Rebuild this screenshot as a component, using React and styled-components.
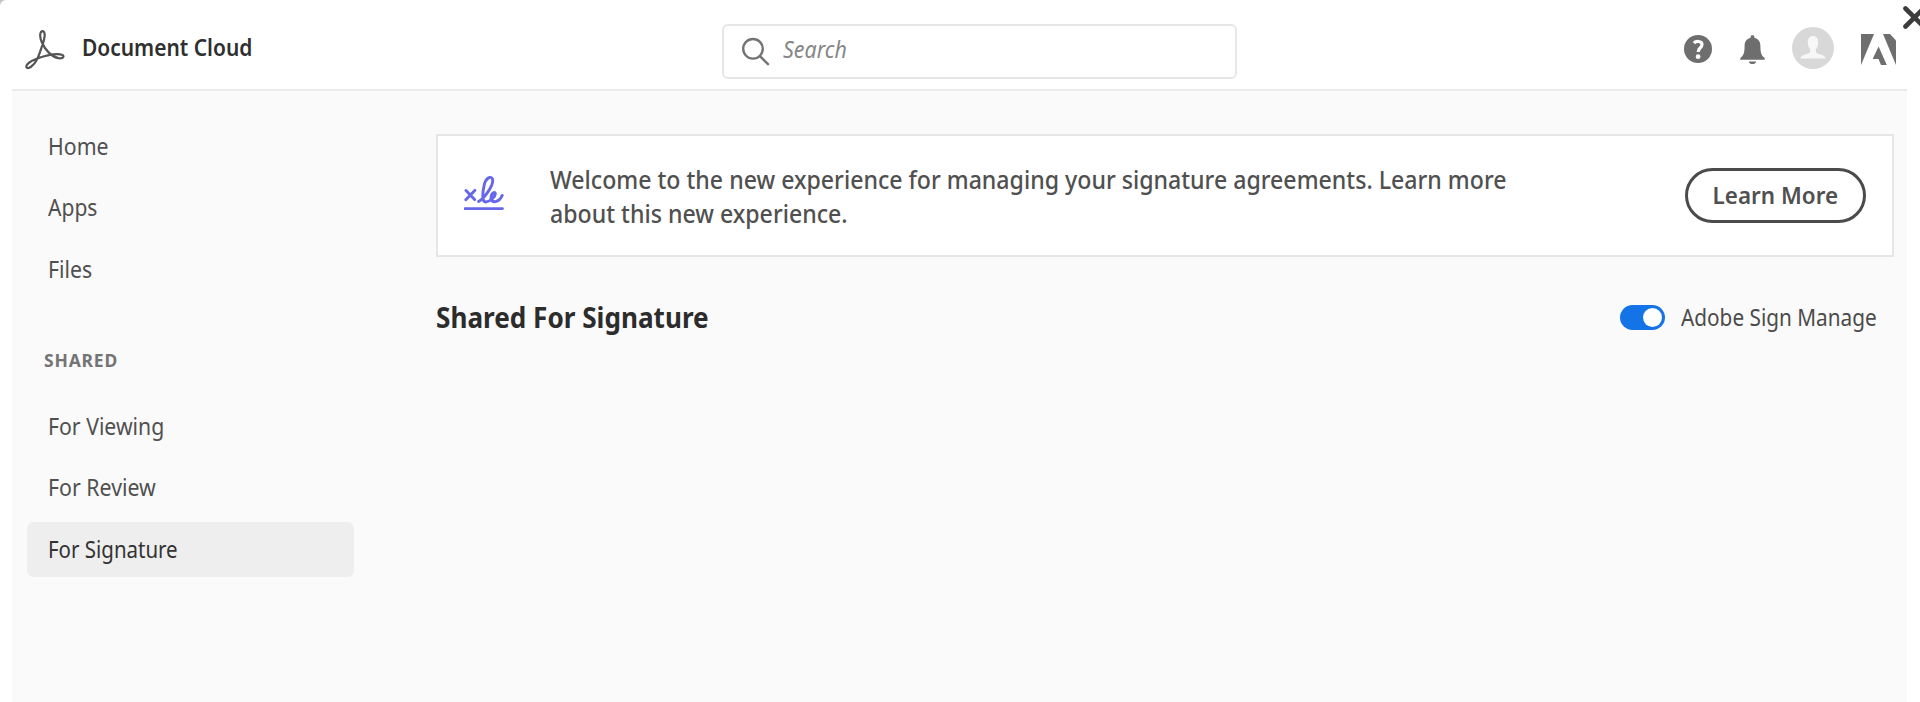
import React, { useState } from 'react';
import styled, { createGlobalStyle } from 'styled-components';

const mainLinks = [
    { label: 'Home', fit: 0.925 },
    { label: 'Apps', fit: 0.915 },
    { label: 'Files', fit: 0.925 },
];

const sharedLinks = [
    { label: 'For Viewing', fit: 0.923 },
    { label: 'For Review', fit: 0.927 },
    { label: 'For Signature', fit: 0.89 },
];

function Header() {
    return (
        <TopBar>
            <Brand>
                <AcrobatLogo viewBox='0 0 42 42'>
                    <path d='M18.2 16.5C20.8 9.5 21.8 3.2 19 2.2C15.6 1.8 15.3 7.8 18 13.8C21 20.6 27.6 28 34.5 29.2C40.6 29.8 41 25.8 36 25.3C30.4 24.8 20.4 26.8 12.6 29.8C5.5 32.6 1.6 36 2.4 38.2C4 40.8 9.6 37 13 30.4C15.2 26 16.8 20.6 18.2 16.5Z' />
                </AcrobatLogo>
                <BrandName>Document Cloud</BrandName>
            </Brand>

            <SearchBox>
                <SearchIcon viewBox='0 0 28 29'>
                    <circle cx='11' cy='11.8' r='9.8' />
                    <path d='M18 19.2L26 27.2' />
                </SearchIcon>
                <SearchText>Search</SearchText>
            </SearchBox>

            <Actions>
                <HelpIcon viewBox='0 0 28 28'>
                    <circle cx='14' cy='14' r='14' fill='#6e6e6e' />
                    <path d='M9.9 8.1C11.6 6.1 18 5.3 18 9.6C18 12.7 14.2 12.9 14.2 16.9' fill='none' stroke='#fff' strokeWidth='3.2' />
                    <circle cx='14.1' cy='21.7' r='2.4' fill='#fff' />
                </HelpIcon>
                <BellIcon viewBox='0 0 25 30'>
                    <path d='M10.7 1.6C10.7 -0.2 14.3 -0.2 14.3 1.6V2.8C18.6 3.8 20.4 7 20.4 11C20.4 18 21.6 20.5 24.2 22.6C25 23.4 24.8 24.8 24.8 24.8H0.2C0.2 24.8 0 23.4 0.8 22.6C3.4 20.5 4.6 18 4.6 11C4.6 7 6.4 3.8 10.7 2.8Z' />
                    <path d='M8.8 26.4H16.2C15.6 30 9.4 30 8.8 26.4Z' />
                </BellIcon>
                <Avatar viewBox='0 0 42 42'>
                    <circle cx='21' cy='21' r='21' fill='#d8d8d8' />
                    <path d='M21 9C24.4 9 26.2 11.5 26.2 15.2C26.2 18.6 25.2 20.4 24 22V25C24 27.4 33.2 27 33.6 31.4H8.4C8.8 27 18 27.4 18 25V22C16.8 20.4 15.8 18.6 15.8 15.2C15.8 11.5 17.6 9 21 9Z' fill='#f7f7f7' />
                </Avatar>
                <AdobeLogo viewBox='0 0 35 31'>
                    <path d='M0 0H13L0 31Z' />
                    <path d='M22 0H29L35 6.5V31Z' />
                    <path d='M17.6 12.4L25.8 31H20L17.5 25H11.6Z' />
                </AdobeLogo>
            </Actions>
        </TopBar>
    );
}

function Sidebar() {
    const [active, setActive] = useState('For Signature');

    const renderLink = ({ label, fit }) => (
        <NavItem key={label} $active={active === label} onClick={() => setActive(label)}>
            <Condensed $fit={fit}>{label}</Condensed>
        </NavItem>
    );

    return (
        <Side>
            <NavGroup>{mainLinks.map(renderLink)}</NavGroup>
            <NavTitle>SHARED</NavTitle>
            <NavGroup>{sharedLinks.map(renderLink)}</NavGroup>
        </Side>
    );
}

function Banner() {
    return (
        <Card>
            <SignIcon viewBox='0 0 40 36'>
                <path d='M2 14.6L10.6 23.6M10.8 14.4L1.8 23.8' />
                <path d='M14.6 25.6C20 22.6 30.4 9 28.4 2.8C26.8 -0.4 21.8 2 20.2 9C18.6 16 17.6 26 21.8 26C25.6 25.8 32.2 20.6 31.2 17C29.6 14.8 26.2 19.6 27.2 23C28.6 27.6 35.4 26 38.2 19.4' />
                <path d='M1 32.6H38.4' />
            </SignIcon>
            <BannerText>
                Welcome to the new experience for managing your signature agreements. Learn more
                <br />
                about this new experience.
            </BannerText>
            <LearnMore>
                <Condensed $fit={0.975} $origin='center'>Learn More</Condensed>
            </LearnMore>
        </Card>
    );
}

function App() {
    const [manage, setManage] = useState(true);

    return (
        <Page>
            <GlobalStyle />
            <Window>
                <Header />
                <Body>
                    <Sidebar />
                    <Content>
                        <Banner />
                        <TitleRow>
                            <Title>Shared For Signature</Title>
                            <SwitchLabel onClick={() => setManage(!manage)}>
                                <Switch $on={manage} />
                                <SwitchText>Adobe Sign Manage</SwitchText>
                            </SwitchLabel>
                        </TitleRow>
                    </Content>
                </Body>
                <CloseIcon viewBox='0 0 23 23'>
                    <path d='M2.5 2.5L20.5 20.5M20.5 2.5L2.5 20.5' />
                </CloseIcon>
            </Window>
        </Page>
    );
}

export default App;

const GlobalStyle = createGlobalStyle`
    * {
        box-sizing: border-box;
    }

    body {
        margin: 0;
        overflow: hidden;
        font-family: 'Noto Sans', 'Open Sans', sans-serif;
        font-size: 23px;
        color: #4b4b4b;
    }
`;

const Page = styled.div`
    height: 702px;
    background-color: #c4c4c4;
`;

const Window = styled.div`
    position: relative;
    height: 100%;
    padding: 0 13px 0 12px;
    overflow: hidden;
    background-color: #fff;
    border-top-left-radius: 6px;
`;

/* Squeezes the text horizontally to get a narrower face */
const Condensed = styled.span`
    display: inline-block;
    white-space: nowrap;
    transform: scaleX(${(props) => props.$fit});
    transform-origin: ${(props) => props.$origin || 'left'};
`;

const TopBar = styled.header`
    display: grid;
    grid-template-columns: 709.5px 515px 1fr;
    height: 91px;
    border-bottom: 2px solid #ebebeb;
`;

const Brand = styled.div`
    display: flex;
    align-items: flex-start;
    padding: 29px 0 0 12px;
`;

const AcrobatLogo = styled.svg`
    width: 42px;
    height: 42px;
    fill: none;
    stroke: #555;
    stroke-width: 2.2;
`;

const BrandName = styled.div`
    margin: 0 0 0 16px;
    line-height: 37px;
    font-weight: 600;
    color: #2f2f2f;
    white-space: nowrap;
    transform: scaleX(0.91);
    transform-origin: left;
`;

const SearchBox = styled.div`
    display: flex;
    align-items: flex-start;
    height: 55px;
    margin-top: 23.5px;
    padding: 12px 0 0 18.5px;
    background-color: #fff;
    border: 2px solid #e6e6e6;
    border-radius: 6px;
`;

const SearchIcon = styled.svg`
    width: 28px;
    height: 29px;
    margin-top: -1px;
    fill: none;
    stroke: #747474;
    stroke-width: 2.4;
    stroke-linecap: round;
`;

const SearchText = styled.div`
    margin: -1px 0 0 13px;
    line-height: 24px;
    font-style: italic;
    color: #868686;
    transform: scaleX(0.93);
    transform-origin: left;
`;

const Actions = styled.div`
    display: flex;
    justify-content: flex-end;
    align-items: flex-start;
    padding: 0 11.5px 0 0;
`;

const HelpIcon = styled.svg`
    width: 28px;
    height: 28px;
    margin-top: 35px;
`;

const BellIcon = styled.svg`
    width: 25px;
    height: 30px;
    margin: 35px 0 0 28px;
    fill: #6e6e6e;
`;

const Avatar = styled.svg`
    width: 42px;
    height: 42px;
    margin: 26.5px 0 0 27px;
`;

const AdobeLogo = styled.svg`
    width: 35px;
    height: 31px;
    margin: 33.5px 0 0 27px;
    fill: #6e6e6e;
`;

const CloseIcon = styled.svg`
    position: absolute;
    top: 6px;
    right: -6px;
    width: 23px;
    height: 23px;
    fill: none;
    stroke: #3c3c3c;
    stroke-width: 4.6;
    stroke-linecap: round;
`;

const Body = styled.div`
    display: flex;
    height: 611px;
    background-color: #fafafa;
`;

const Side = styled.nav`
    width: 424px;
    padding: 27.5px 82.5px 0 15px;
`;

const NavGroup = styled.div`
    display: flex;
    flex-direction: column;
    gap: 7.3px;
`;

const NavItem = styled.div`
    height: 54.5px;
    padding-left: 20.5px;
    line-height: 55px;
    border-radius: 7px;
    color: ${(props) => (props.$active ? '#333' : '#505050')};
    background-color: ${(props) => (props.$active ? '#eee' : 'transparent')};
    cursor: pointer;
`;

const NavTitle = styled.div`
    margin: 51.5px 0 26.5px 17px;
    line-height: 24px;
    font-size: 17.5px;
    font-weight: 700;
    letter-spacing: 0.8px;
    color: #747474;
`;

const Content = styled.main`
    flex: 1;
    padding: 43px 13.5px 0 0;
`;

const Card = styled.section`
    display: flex;
    align-items: center;
    height: 123px;
    padding: 0 26px;
    background-color: #fff;
    border: 2px solid #e6e6e6;
`;

const SignIcon = styled.svg`
    flex: none;
    width: 40px;
    height: 36px;
    margin: 0 0 3px -0.5px;
    fill: none;
    stroke: #6767ec;
    stroke-width: 2.9;
    stroke-linecap: round;
`;

const BannerText = styled.p`
    flex: 1;
    width: 0;
    margin: 0 0 0 46px;
    font-size: 26px;
    font-weight: 500;
    line-height: 34px;
    color: #505050;
    white-space: nowrap;
    transform: scaleX(0.8895);
    transform-origin: left;
`;

const LearnMore = styled.button`
    flex: none;
    width: 181px;
    height: 55px;
    padding: 0 0 2px;
    font: inherit;
    font-weight: 600;
    color: #505050;
    background-color: transparent;
    border: 3px solid #4b4b4b;
    border-radius: 28px;
    cursor: pointer;
`;

const TitleRow = styled.div`
    display: flex;
    justify-content: space-between;
    align-items: center;
    height: 40px;
    margin-top: 40px;
`;

const Title = styled.h1`
    margin: 0;
    font-size: 28px;
    font-weight: 700;
    line-height: 38px;
    color: #2c2c2c;
    white-space: nowrap;
    transform: scaleX(0.933);
    transform-origin: left;
`;

const SwitchLabel = styled.div`
    display: flex;
    align-items: center;
    width: 273.5px;
    cursor: pointer;
`;

const Switch = styled.span`
    display: flex;
    flex: none;
    justify-content: ${(props) => (props.$on ? 'flex-end' : 'flex-start')};
    width: 45px;
    height: 25px;
    padding: 3px;
    border-radius: 13px;
    background-color: ${(props) => (props.$on ? '#1473e6' : '#b3b3b3')};

    &:before {
        content: '';
        width: 19px;
        height: 19px;
        border-radius: 50%;
        background-color: #fff;
    }
`;

const SwitchText = styled.span`
    margin-left: 16px;
    white-space: nowrap;
    transform: scaleX(0.903);
    transform-origin: left;
`;
